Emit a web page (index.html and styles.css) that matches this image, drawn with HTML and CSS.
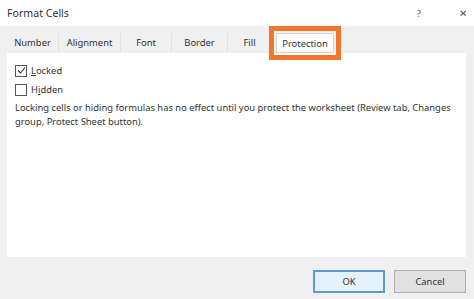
FILE: index.html
```html
<!DOCTYPE html>
<html lang="en">
<head>
    <meta charset="UTF-8">
    <title>Format Cells</title>
    <link rel="stylesheet" href="styles.css">
</head>
<body>
    <div class="dialog">
        <div class="titlebar">
            <span class="title">Format Cells</span>
            <span class="help">?</span>
            <span class="close">&#x2715;</span>
        </div>

        <div class="body">
            <div class="tabs">
                <div class="tab tab-number">Number</div>
                <div class="tab tab-alignment">Alignment</div>
                <div class="tab tab-font">Font</div>
                <div class="tab tab-border">Border</div>
                <div class="tab tab-fill">Fill</div>
                <div class="tab tab-protection active">Protection</div>
            </div>

            <div class="panel">
                <label class="check">
                    <span class="box checked">
                        <svg width="9" height="9" viewBox="0 0 9 9"><path d="M1 4.5 L3.5 7 L8 1.5" fill="none" stroke="#333" stroke-width="1.1"/></svg>
                    </span>
                    <span><u>L</u>ocked</span>
                </label>
                <label class="check">
                    <span class="box"></span>
                    <span>H<u>i</u>dden</span>
                </label>
                <p class="note">Locking cells or hiding formulas has no effect until you protect the worksheet (Review tab, Changes group, Protect Sheet button).</p>
            </div>

            <div class="buttons">
                <button class="btn default">OK</button>
                <button class="btn">Cancel</button>
            </div>
        </div>
    </div>
</body>
</html>
```

FILE: styles.css
```css
body {
    margin: 0;
    padding: 0;
    background: #f0f0f0;
    font-family: 'Noto Sans', 'Open Sans', sans-serif;
    font-size: 9.4px;
    color: #222;
}

.dialog {
    width: 474px;
    height: 299px;
    display: flex;
    flex-direction: column;
}

.titlebar {
    height: 26px;
    background: #ffffff;
    display: flex;
    align-items: center;
    padding: 0 0 0 7px;
    box-sizing: border-box;
}

.title {
    font-size: 10.6px;
    color: #333;
    flex-grow: 1;
}

.help {
    font-size: 9px;
    color: #555;
    width: 42px;
}

.close {
    font-size: 10px;
    color: #555;
    width: 15px;
}

.body {
    flex-grow: 1;
    background: #f0f0f0;
    padding: 7px 8px 0 7px;
    display: flex;
    flex-direction: column;
}

.tabs {
    display: flex;
    height: 20px;
    position: relative;
}

.tab {
    box-sizing: border-box;
    height: 20px;
    line-height: 19px;
    text-align: center;
    color: #333;
    border-right: 1px solid #e2e2e2;
}

.tab-number { width: 52px; }
.tab-alignment { width: 62px; }
.tab-font { width: 51px; }
.tab-border { width: 56px; }
.tab-fill { width: 43px; border-right: none; }

.tab.active {
    position: relative;
    width: 58px;
    margin-left: 5px;
    background: #ffffff;
    border: 1px solid #d4d4d4;
    height: 20px;
    outline: 5px solid #f0772e;
    outline-offset: 2px;
}

.panel {
    background: #ffffff;
    height: 204px;
    padding: 8px 8px 0 8px;
    box-sizing: border-box;
}

.check {
    display: flex;
    align-items: center;
    gap: 4px;
    height: 19px;
    color: #333;
}

.check u {
    text-decoration-thickness: 1px;
}

.box {
    width: 10px;
    height: 10px;
    border: 1px solid #555;
    background: #fff;
    display: flex;
    align-items: center;
    justify-content: center;
}

.note {
    margin: 2px 0 0 0;
    line-height: 14px;
    color: #333;
}

.buttons {
    display: flex;
    justify-content: flex-end;
    gap: 9px;
    padding-top: 13px;
}

.btn {
    width: 72px;
    height: 23px;
    background: #e1e1e1;
    border: 1px solid #adadad;
    font-family: 'Noto Sans', 'Open Sans', sans-serif;
    font-size: 9.4px;
    color: #333;
    padding: 0;
}

.btn.default {
    border: 2px solid #5b9bd5;
    background: #e5f1fb;
}
```
